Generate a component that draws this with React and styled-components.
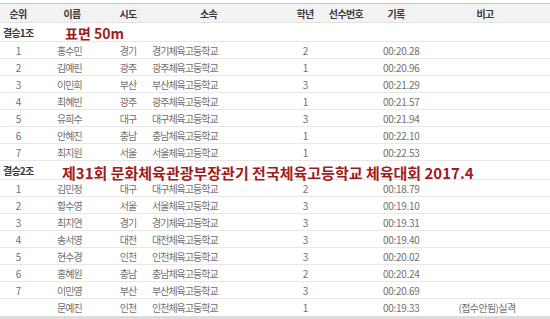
import React from "react";
import styled, { createGlobalStyle } from "styled-components";

const GlobalStyle = createGlobalStyle`
  html, body { margin: 0; padding: 0; background: #fff; }
  body { font-family: "Noto Sans CJK KR", "Noto Sans", sans-serif; }
`;

const Wrap = styled.div`
  position: relative;
  width: 550px;
  padding-top: 3px;
`;

const COLS = "36px 72px 40px 142px 30px 52px 48px 1fr";

const HeaderRow = styled.div`
  display: grid;
  grid-template-columns: ${COLS};
  height: 20px;
  box-sizing: border-box;
  background: #f2f2f2;
  border-top: 1px solid #c9c9c9;
  border-bottom: 1px solid #e2e2e2;
  align-items: center;
`;

const HeadCell = styled.div`
  font-size: 10px;
  font-weight: 700;
  color: #3a3a3a;
  letter-spacing: -0.6px;
  text-align: ${(p) => p.$align || "center"};
  padding-left: ${(p) => p.$pl || 0}px;
  white-space: nowrap;
`;

const BodyRow = styled.div`
  display: grid;
  grid-template-columns: ${COLS};
  height: 17px;
  box-sizing: border-box;
  border-bottom: 1px solid #e8e8e8;
  align-items: center;
  &:last-child {
    height: 20px;
    border-bottom: 3px solid #dcdcdc;
  }
`;

const GroupRow = styled.div`
  height: 19px;
  box-sizing: border-box;
  border-bottom: 1px solid #e8e8e8;
  display: flex;
  align-items: center;
  padding: 1px 0 0 3px;
  font-size: 10px;
  font-weight: 700;
  color: #3a3a3a;
  letter-spacing: -0.8px;
`;

const Cell = styled.div`
  font-size: 10px;
  color: #707070;
  letter-spacing: ${(p) => p.$ls ?? -1}px;
  text-align: ${(p) => p.$align || "center"};
  padding-left: ${(p) => p.$pl || 0}px;
  white-space: nowrap;
`;

const Overlay = styled.div`
  position: absolute;
  left: ${(p) => p.$left}px;
  top: ${(p) => p.$top}px;
  font-size: ${(p) => p.$size}px;
  line-height: 1;
  font-weight: 700;
  color: #a01c1e;
  white-space: nowrap;
`;

const groups = [
  {
    label: "결승1조",
    rows: [
      ["1", "홍수민", "경기", "경기체육고등학교", "2", "00:20.28", ""],
      ["2", "김예린", "광주", "광주체육고등학교", "1", "00:20.96", ""],
      ["3", "이민희", "부산", "부산체육고등학교", "3", "00:21.29", ""],
      ["4", "최혜빈", "광주", "광주체육고등학교", "1", "00:21.57", ""],
      ["5", "유희수", "대구", "대구체육고등학교", "3", "00:21.94", ""],
      ["6", "안혜진", "충남", "충남체육고등학교", "1", "00:22.10", ""],
      ["7", "최지원", "서울", "서울체육고등학교", "1", "00:22.53", ""],
    ],
  },
  {
    label: "결승2조",
    rows: [
      ["1", "김민정", "대구", "대구체육고등학교", "2", "00:18.79", ""],
      ["2", "황수영", "서울", "서울체육고등학교", "3", "00:19.10", ""],
      ["3", "최지연", "경기", "경기체육고등학교", "3", "00:19.31", ""],
      ["4", "송서영", "대전", "대전체육고등학교", "3", "00:19.40", ""],
      ["5", "현수경", "인천", "인천체육고등학교", "3", "00:20.02", ""],
      ["6", "홍혜원", "충남", "충남체육고등학교", "2", "00:20.24", ""],
      ["7", "이민영", "부산", "부산체육고등학교", "3", "00:20.69", ""],
      ["", "문예진", "인천", "인천체육고등학교", "1", "00:19.33", "(접수안됨)실격"],
    ],
  },
];

const Body = styled.div`
  display: flex;
  flex-direction: column;
`;

export default function App() {
  return (
    <>
      <GlobalStyle />
      <Wrap>
        <HeaderRow>
          <HeadCell>순위</HeadCell>
          <HeadCell>이름</HeadCell>
          <HeadCell>시도</HeadCell>
          <HeadCell $align="left" $pl={52}>소속</HeadCell>
          <HeadCell>학년</HeadCell>
          <HeadCell>선수번호</HeadCell>
          <HeadCell>기록</HeadCell>
          <HeadCell>비고</HeadCell>
        </HeaderRow>
        <Body>
          {groups.map((g) => (
            <React.Fragment key={g.label}>
              <GroupRow>{g.label}</GroupRow>
              {g.rows.map((r, i) => (
                <BodyRow key={g.label + i}>
                  <Cell>{r[0]}</Cell>
                  <Cell $align="left" $pl={21}>{r[1]}</Cell>
                  <Cell>{r[2]}</Cell>
                  <Cell $align="left" $pl={4}>{r[3]}</Cell>
                  <Cell>{r[4]}</Cell>
                  <Cell></Cell>
                  <Cell $align="left" $pl={11} $ls={-0.3}>{r[5]}</Cell>
                  <Cell $pl={4} $ls={-0.6}>{r[6]}</Cell>
                </BodyRow>
              ))}
            </React.Fragment>
          ))}
        </Body>
        <Overlay $left={65} $top={26} $size={14}>표면 50m</Overlay>
        <Overlay $left={62} $top={165} $size={15}>
          제31회 문화체육관광부장관기 전국체육고등학교 체육대회 2017.4
        </Overlay>
      </Wrap>
    </>
  );
}
